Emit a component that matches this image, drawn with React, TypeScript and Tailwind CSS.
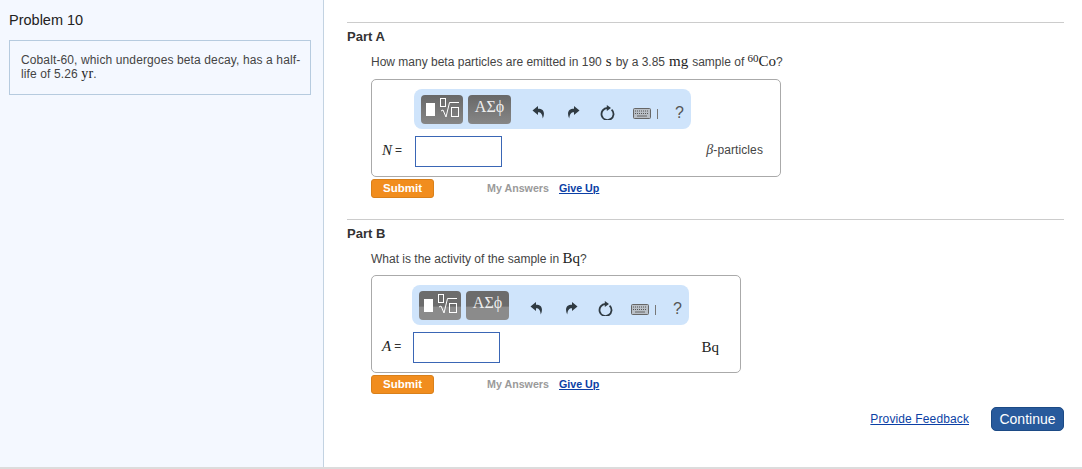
import React from 'react';

const sans = "font-['Liberation_Sans',Arial,sans-serif]";
const serif = "font-['Liberation_Serif','Times_New_Roman',serif]";

const Unit: React.FC<{ children: React.ReactNode }> = ({ children }) => (
  <span className={`${serif} text-[15px] text-[#222] mx-[4px]`}>{children}</span>
);

const MathIcon = () => (
  <svg width="42" height="29" viewBox="0 0 42 29" fill="none">
    <rect x="5" y="8" width="9" height="13" fill="#fff" />
    <rect x="19.5" y="3.5" width="5" height="8" stroke="#fff" strokeWidth="1" />
    <path d="M20 16 L22 15 L25 22 L28.5 7.5 H38" stroke="#fff" strokeWidth="1" />
    <rect x="30.5" y="12.5" width="7" height="9" stroke="#fff" strokeWidth="1" />
  </svg>
);

const UndoIcon = () => (
  <svg width="13" height="14" viewBox="0 0 13 14" fill="#2f3a42">
    <path d="M6 1 L0.5 5.5 L6 10 V7.2 C9 7.2 10.2 8.8 10.8 13.5 C13.2 8 12 3.8 6 3.8 Z" />
  </svg>
);

const RefreshIcon = () => (
  <svg width="15" height="15" viewBox="0 0 15 15" fill="none">
    <path d="M11.6 4.6 A6 6 0 1 1 7.5 3" stroke="#2f3a42" strokeWidth="1.8" />
    <path d="M6.8 0 L11 3 L6.8 6 Z" fill="#2f3a42" />
  </svg>
);

const KeyboardIcon = () => (
  <svg width="18" height="11" viewBox="0 0 18 11">
    <rect x="0.5" y="0.5" width="17" height="10" rx="1" fill="#b9bfc6" stroke="#666" />
    <path d="M2 3h14M2 5.5h14" stroke="#555" strokeWidth="1" strokeDasharray="1 1" />
    <path d="M4 8h10" stroke="#666" strokeWidth="1" />
  </svg>
);

const Toolbar: React.FC<{ split?: boolean; className: string }> = ({ split, className }) => {
  const btn = split
    ? 'bg-[linear-gradient(#6c6c6c_0%,#6c6c6c_52%,#8b8b8b_56%,#8b8b8b_100%)]'
    : 'bg-[linear-gradient(#686868,#868686)]';
  return (
    <div className={`w-[277px] h-10 rounded-lg bg-[#cfe4fb] flex items-center pl-[7px] ${className}`}>
      <div className={`w-[42px] h-[29px] rounded-[4px] ${btn}`}>
        <MathIcon />
      </div>
      <div className={`w-[43px] h-[29px] rounded-[4px] ml-[5px] ${btn} ${serif} text-[#eee] text-[16px] leading-[24px] text-center`}>
        ΑΣϕ
      </div>
      <div className="flex items-center mt-[5px]">
        <div className="ml-[21px]">
          <UndoIcon />
        </div>
        <div className="ml-[22px] -scale-x-100">
          <UndoIcon />
        </div>
        <div className="ml-[20px] mt-[2px]">
          <RefreshIcon />
        </div>
        <div className="ml-[18px] mt-[4px]">
          <KeyboardIcon />
        </div>
        <div className="ml-[6px] mt-[4px] w-px h-[10px] bg-[#777]" />
        <span className={`ml-[17px] mt-[2px] ${sans} text-[16px] leading-[16px] text-[#555]`}>?</span>
      </div>
    </div>
  );
};

const AnswerBox: React.FC<{
  width: string;
  toolbarClass: string;
  labelClass: string;
  split?: boolean;
  variable: string;
  unit: React.ReactNode;
  unitClass: string;
}> = ({ width, toolbarClass, labelClass, split, variable, unit, unitClass }) => (
  <div className={`${width} h-[98px] mt-[9px] rounded-[5px] border border-[#aaa] bg-white pt-[9px]`}>
    <Toolbar split={split} className={toolbarClass} />
    <div className="flex items-center mt-[7px] h-[31px]">
      <div className={`${labelClass} pl-[10px] pb-[3px] flex items-center`}>
        <span className={`${serif} italic text-[15px] text-[#222]`}>{variable}</span>
        <span className="text-[12px] text-[#333] ml-[3px]">=</span>
      </div>
      <div className="w-[87px] h-[31px] border border-[#3a66b5] bg-white" />
      <span className={`ml-auto ${unitClass}`}>{unit}</span>
    </div>
  </div>
);

const SubmitRow = () => (
  <div className="flex items-center mt-[2px] h-[19px]">
    <button className="w-[63px] h-[19px] rounded-[3px] border border-[#d9801a] bg-[#f18d1e] text-white text-[11.5px] font-bold leading-none">
      Submit
    </button>
    <span className="ml-[53px] text-[10.7px] font-bold text-[#9a9a9a]">My Answers</span>
    <a className="ml-[10px] text-[10.7px] font-bold text-[#0b3fa5] underline">Give Up</a>
  </div>
);

export default function App() {
  return (
    <div className={`${sans} w-[1082px] h-[469px] flex bg-white border-b-2 border-[#dcdcdc] overflow-hidden`}>
      <aside className="w-[324px] h-full shrink-0 bg-[#f4f8ff] border-r border-[#c3d3e2] pt-[11px] pl-[9px]">
        <h1 className="text-[14.5px] leading-[18px] text-[#222]">Problem 10</h1>
        <div className="w-[302px] h-[55px] mt-[11px] border border-[#b6cbdf] pl-[11px] pr-[8px] pt-[12px] text-[12px] leading-[14px] tracking-[0.12px] text-[#444]">
          Cobalt-60, which undergoes beta decay, has a half-life of 5.26{' '}
          <span className={`${serif} text-[14px] text-[#222]`}>yr</span>.
        </div>
      </aside>

      <main className="flex-1 pl-[23px] pr-[18px] pt-[22px]">
        <section className="border-t border-[#ccc]">
          <h2 className="text-[13px] leading-[15px] font-bold text-[#333] mt-[6px]">Part A</h2>
          <div className="ml-[24px]">
            <p className="text-[12px] leading-[16px] text-[#444] mt-[6px] whitespace-nowrap">
              How many beta particles are emitted in 190<Unit>s</Unit>by a 3.85<Unit>mg</Unit>sample of{' '}
              <span className={`${serif} text-[11px] align-[4px] text-[#222]`}>60</span>
              <span className={`${serif} text-[15px] text-[#222]`}>Co</span>?
            </p>
            <AnswerBox
              width="w-[410px]"
              toolbarClass="ml-[42px]"
              labelClass="w-[43px]"
              variable="N"
              unit={
                <span className="block mb-[5px] text-[12px] tracking-[0.1px] text-[#444]">
                  <span className={`${serif} italic text-[14px]`}>β</span>-particles
                </span>
              }
              unitClass="mr-[17px]"
            />
            <SubmitRow />
          </div>
        </section>

        <section className="border-t border-[#ccc] mt-[21px]">
          <h2 className="text-[13px] leading-[15px] font-bold text-[#333] mt-[6px]">Part B</h2>
          <div className="ml-[24px]">
            <p className="text-[12px] leading-[16px] text-[#444] mt-[9px] mb-[-1px] whitespace-nowrap">
              What is the activity of the sample in <span className={`${serif} text-[15px] text-[#222]`}>Bq</span>?
            </p>
            <AnswerBox
              width="w-[370px]"
              toolbarClass="ml-[40px]"
              labelClass="w-[41px]"
              split
              variable="A"
              unit={<span className={`${serif} block text-[15px] text-[#222]`}>Bq</span>}
              unitClass="mr-[21px]"
            />
            <SubmitRow />
          </div>
        </section>

        <div className="flex items-center justify-end mt-[13px] h-6">
          <a className="text-[12px] tracking-[0.12px] text-[#0b3fa5] underline">Provide Feedback</a>
          <button className="ml-[22px] w-[73px] h-6 rounded-[5px] border border-[#1c4a85] bg-[#285a9c] text-white text-[14px] leading-none">
            Continue
          </button>
        </div>
      </main>
    </div>
  );
}
